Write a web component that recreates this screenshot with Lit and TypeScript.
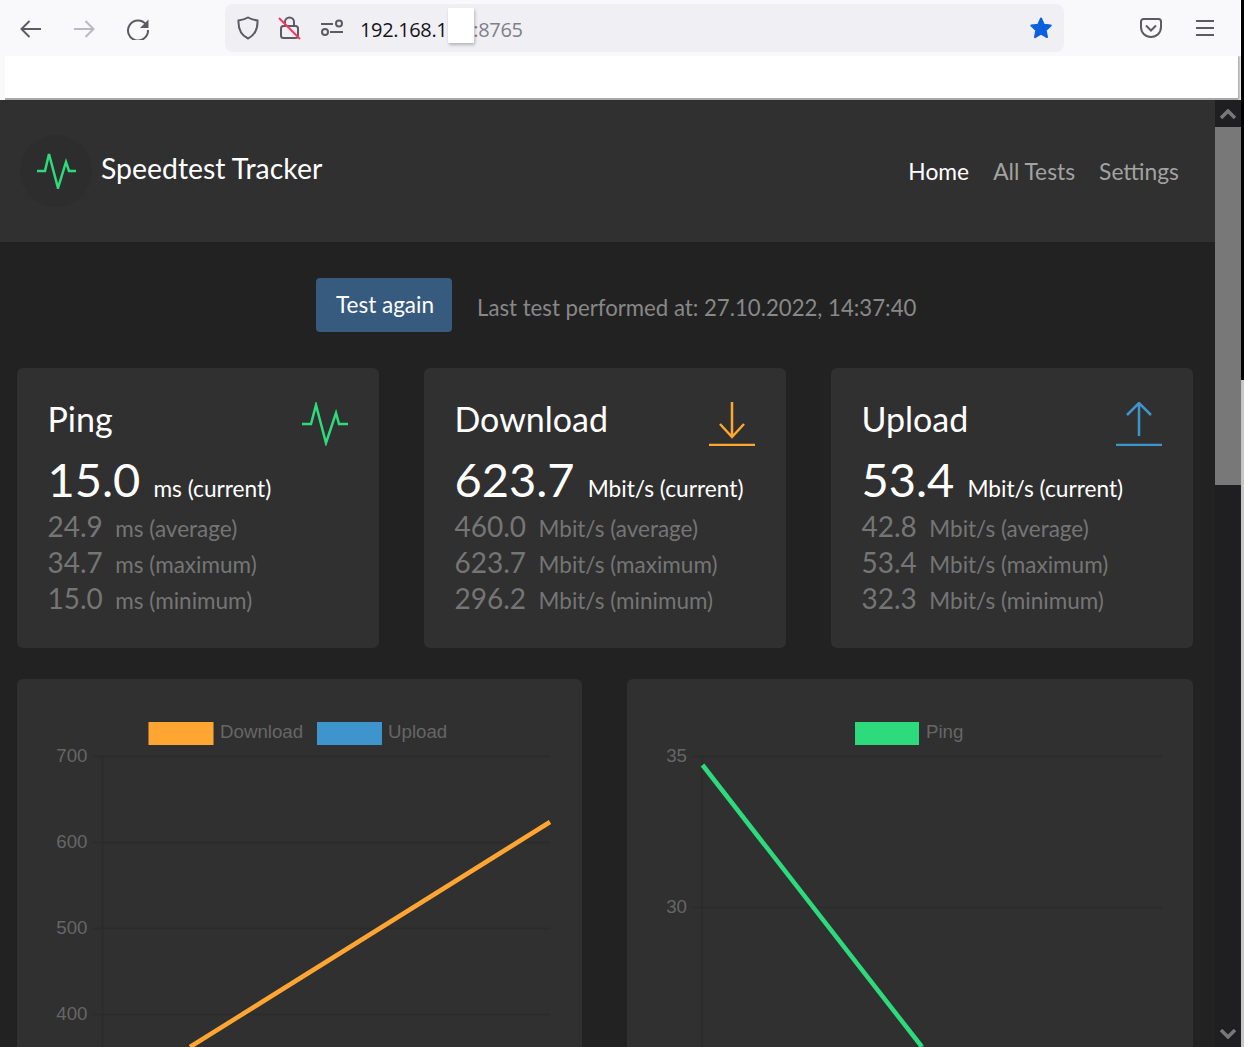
import { LitElement, html, svg, css } from 'lit';
import { customElement, property } from 'lit/decorators.js';

const GREEN = '#2edb7c';
const ORANGE = '#ffa632';
const BLUE = '#3e95cd';

interface Reading {
  value: string;
  label: string;
}

interface ChartSpec {
  legend: { x: number; width: number; textX: number; label: string; color: string }[];
  ticks: { y: number; label: string }[];
  axisX: number;
  rightX: number;
  line: { x1: number; y1: number; x2: number; y2: number; color: string };
}

@customElement('browser-bar')
export class BrowserBar extends LitElement {
  static styles = css`
    :host {
      display: flex;
      align-items: center;
      height: 56px;
      background: #f9f9fb;
      position: relative;
    }
    svg {
      display: block;
      flex: none;
      fill: none;
      stroke: #5b5b66;
      stroke-width: 2;
    }
    .nav {
      display: flex;
      gap: 30px;
      margin-left: 18px;
    }
    .faded {
      stroke: #b9b9c0;
    }
    .urlbar {
      display: flex;
      align-items: center;
      width: 839px;
      height: 48px;
      margin-left: 75px;
      padding-left: 11px;
      box-sizing: border-box;
      background: #f0f0f4;
      border-radius: 8px;
      position: relative;
    }
    .site {
      display: flex;
      gap: 18px;
    }
    .url {
      margin: 2px 0 0 16px;
      font: 20px 'Open Sans', sans-serif;
      letter-spacing: -0.35px;
      color: #15141a;
      white-space: nowrap;
    }
    .url span {
      color: #7f7f86;
      margin-left: 21px;
    }
    .star {
      margin-left: auto;
      margin-right: 11px;
      fill: #0a60df;
      stroke: #0a60df;
      stroke-linejoin: round;
    }
    .redact {
      position: absolute;
      left: 223px;
      top: 4px;
      width: 26px;
      height: 35px;
      background: #fff;
      box-shadow: 1px 2px 3px rgba(0, 0, 0, 0.25);
    }
    .tools {
      display: flex;
      align-items: center;
      gap: 31px;
      margin-left: 75px;
    }
  `;

  render() {
    return html`
      <div class="nav">
        <svg width="24" height="24" viewBox="0 0 24 24"><path d="M23 13H3.500M11.500 5L3.500 13l8 8" /></svg>
        <svg class="faded" width="24" height="24" viewBox="0 0 24 24"><path d="M2 13h19.500M13.500 5l8 8-8 8" /></svg>
        <svg width="24" height="24" viewBox="0 0 24 24">
          <path d="M20 8.500A10 10 0 1 0 22 14" />
          <path d="M22.500 3.500v8.500H14z" fill="#5b5b66" stroke="none" />
        </svg>
      </div>
      <div class="urlbar">
        <div class="site">
          <svg width="24" height="26" viewBox="0 0 24 26">
            <path d="M12 2.500c3 1.800 6 2.600 9.500 3 .4 8.500-2.500 14.500-9.500 18C5 20 2.100 14 2.500 5.500c3.500-.4 6.500-1.200 9.500-3z" />
          </svg>
          <svg width="24" height="26" viewBox="0 0 24 26">
            <rect x="3" y="11" width="17" height="12" rx="2.500" />
            <path d="M7 11V7a4.500 4.500 0 0 1 9 0v4" />
            <path d="M1 3l21 21" stroke="#f6375f" />
          </svg>
          <svg width="24" height="26" viewBox="0 0 24 26">
            <path d="M1 9h12M10 17h13" />
            <circle cx="19" cy="8.500" r="3" />
            <circle cx="5" cy="17" r="3" />
          </svg>
        </div>
        <div class="url">192.168.1.<span>:8765</span></div>
        <div class="redact"></div>
        <svg class="star" width="24" height="24" viewBox="0 0 24 24">
          <path d="M12 2.500l2.900 6.300 6.800.8-5 4.700 1.300 6.800-6-3.400-6 3.400 1.300-6.800-5-4.700 6.800-.8z" />
        </svg>
      </div>
      <div class="tools">
        <svg width="24" height="24" viewBox="0 0 24 24">
          <path d="M4.500 3h15A2.500 2.500 0 0 1 22 5.500V11c0 6-4.500 10-10 10S2 17 2 11V5.500A2.500 2.500 0 0 1 4.500 3z" />
          <path d="M7 9.500l5 5 5-5" />
        </svg>
        <svg width="22" height="24" viewBox="0 0 22 24"><path d="M2 5h18M2 12h18M2 19h18" /></svg>
      </div>
    `;
  }
}

@customElement('stat-card')
export class StatCard extends LitElement {
  static styles = css`
    :host {
      display: block;
      height: 280px;
      padding: 34px 31px 0 30.5px;
      box-sizing: border-box;
      background: #303030;
      border-radius: 6px;
      color: #fff;
    }
    .head {
      display: flex;
      justify-content: space-between;
      height: 44px;
    }
    h3 {
      margin: 0;
      font-size: 34px;
      font-weight: 400;
      line-height: 34px;
    }
    .current {
      margin-top: 8px;
      height: 54px;
      line-height: 50px;
      font-size: 22.7px;
      white-space: nowrap;
    }
    .current b {
      font-size: 47px;
      font-weight: 400;
      margin-right: 13px;
    }
    .row {
      height: 36px;
      line-height: 36px;
      font-size: 22.5px;
      color: #757575;
      white-space: nowrap;
    }
    .row b {
      font-size: 28px;
      font-weight: 400;
      margin-right: 12.5px;
    }
  `;

  @property() heading = '';
  @property() unit = '';
  @property() current = '';
  @property({ type: Array }) readings: Reading[] = [];

  render() {
    return html`
      <div class="head">
        <h3>${this.heading}</h3>
        <slot></slot>
      </div>
      <div class="current"><b>${this.current}</b>${this.unit} (current)</div>
      ${this.readings.map(
        (r) => html`<div class="row"><b>${r.value}</b>${this.unit} (${r.label})</div>`
      )}
    `;
  }
}

@customElement('chart-card')
export class ChartCard extends LitElement {
  static styles = css`
    :host {
      display: block;
      height: 500px;
      background: #303030;
      border-radius: 6px;
    }
    svg {
      display: block;
      width: 100%;
      height: 100%;
    }
    text {
      font: 18.7px 'Liberation Sans', Arial, sans-serif;
      fill: #666;
    }
    .grid {
      stroke: #2b2b2b;
      stroke-width: 1.500;
    }
  `;

  @property({ type: Object }) spec!: ChartSpec;

  render() {
    const s = this.spec;
    return html`
      <svg>
        ${s.legend.map(
          (l) => svg`
            <rect x=${l.x} y="43" width=${l.width} height="23" fill=${l.color} />
            <text x=${l.textX} y="59">${l.label}</text>
          `
        )}
        <line class="grid" x1=${s.axisX} y1="77" x2=${s.axisX} y2="500" />
        ${s.ticks.map(
          (t) => svg`
            <line class="grid" x1=${s.axisX - 10} y1=${t.y} x2=${s.rightX} y2=${t.y} />
            <text x=${s.axisX - 15} y=${t.y + 5} text-anchor="end">${t.label}</text>
          `
        )}
        <line
          x1=${s.line.x1}
          y1=${s.line.y1}
          x2=${s.line.x2}
          y2=${s.line.y2}
          stroke=${s.line.color}
          stroke-width="4.500"
        />
      </svg>
    `;
  }
}

const downloadChart: ChartSpec = {
  legend: [
    { x: 131.5, width: 65, textX: 203, label: 'Download', color: ORANGE },
    { x: 300, width: 65, textX: 371, label: 'Upload', color: BLUE },
  ],
  ticks: [
    { y: 77.5, label: '700' },
    { y: 163.5, label: '600' },
    { y: 249.5, label: '500' },
    { y: 335.5, label: '400' },
    { y: 421.5, label: '300' },
  ],
  axisX: 85.5,
  rightX: 533,
  line: { x1: 533, y1: 143, x2: 173, y2: 368, color: ORANGE },
};

const pingChart: ChartSpec = {
  legend: [{ x: 228, width: 64, textX: 299, label: 'Ping', color: GREEN }],
  ticks: [
    { y: 77.5, label: '35' },
    { y: 228.5, label: '30' },
    { y: 379.5, label: '25' },
  ],
  axisX: 75,
  rightX: 535,
  line: { x1: 75.5, y1: 86, x2: 295, y2: 368, color: GREEN },
};

@customElement('app-root')
export class AppRoot extends LitElement {
  static styles = css`
    :host {
      display: flex;
      width: 1244px;
      height: 1047px;
      overflow: hidden;
      font-family: Lato, sans-serif;
      background: #222;
    }
    .window {
      width: 1241px;
      display: flex;
      flex-direction: column;
    }
    .edge {
      width: 3px;
      background: linear-gradient(#000 380px, #c6c6c6 380px);
    }
    .blank {
      height: 44px;
      background: #f9f9fb;
    }
    .blank div {
      height: 42px;
      margin: 0 3px 0 5px;
      background: #fff;
      border-bottom: 2px solid #a8a8a8;
      box-shadow: 2px 0 2px rgba(0, 0, 0, 0.3);
    }
    .page {
      flex: 1;
      display: flex;
      min-height: 0;
    }
    .content {
      width: 1215px;
    }
    .navbar {
      display: flex;
      align-items: center;
      height: 142px;
      padding: 0 36px 0 20px;
      box-sizing: border-box;
      background: #303030;
    }
    .logo {
      width: 72px;
      height: 72px;
      border-radius: 50%;
      background: #2d2d2d;
      display: flex;
      align-items: center;
      justify-content: center;
    }
    .brand {
      margin: -6px 0 0 9px;
      font-size: 28.4px;
      color: #fff;
    }
    nav {
      margin-left: auto;
      display: flex;
      gap: 24px;
      font-size: 22.8px;
      color: #a2a2a2;
    }
    nav .active {
      color: #fff;
    }
    .actions {
      display: flex;
      align-items: center;
      gap: 25px;
      margin: 36px 0;
      padding-left: 316px;
    }
    button {
      width: 136px;
      height: 54px;
      padding: 0 0 2px 2px;
      margin: 0;
      border: none;
      border-radius: 4px;
      background: #375a7f;
      color: #fff;
      font: 22.5px Lato, sans-serif;
    }
    .last {
      font-size: 22.2px;
      color: #888;
      padding-top: 4px;
    }
    .stats,
    .charts {
      display: grid;
      column-gap: 45px;
      padding: 0 22px 0 17px;
    }
    .stats {
      grid-template-columns: repeat(3, minmax(0, 1fr));
    }
    .charts {
      grid-template-columns: 565px 566px;
      margin-top: 31px;
    }
    .icon {
      display: block;
      fill: none;
      stroke-width: 2.500;
    }
    .scrollbar {
      width: 26px;
      display: flex;
      flex-direction: column;
      background: #1f1f21;
    }
    .arrow {
      height: 27px;
      flex: none;
      display: flex;
      align-items: center;
      justify-content: center;
      box-sizing: border-box;
    }
    .arrow svg {
      fill: none;
      stroke: #787878;
      stroke-width: 3.500;
    }
    .thumb {
      height: 358px;
      background: #787878;
    }
    .grow {
      flex: 1;
    }
  `;

  render() {
    return html`
      <div class="window">
        <browser-bar></browser-bar>
        <div class="blank"><div></div></div>
        <div class="page">
          <div class="content">
            <div class="navbar">
              <div class="logo">
                <svg class="icon" width="40" height="36" viewBox="36 153 40 36" stroke=${GREEN}>
                  <path d="M37 171h8l4-17 9 34 8-26 3 9h7" />
                </svg>
              </div>
              <div class="brand">Speedtest Tracker</div>
              <nav>
                <span class="active">Home</span>
                <span>All Tests</span>
                <span>Settings</span>
              </nav>
            </div>
            <div class="actions">
              <button>Test again</button>
              <span class="last">Last test performed at: 27.10.2022, 14:37:40</span>
            </div>
            <div class="stats">
              <stat-card
                heading="Ping"
                unit="ms"
                current="15.0"
                .readings=${[
                  { value: '24.9', label: 'average' },
                  { value: '34.7', label: 'maximum' },
                  { value: '15.0', label: 'minimum' },
                ]}
              >
                <svg class="icon" width="46" height="44" viewBox="302 402 46 44" stroke=${GREEN}>
                  <path d="M302 424h9l5-19 10 38 10-30 3 11h9" />
                </svg>
              </stat-card>
              <stat-card
                heading="Download"
                unit="Mbit/s"
                current="623.7"
                .readings=${[
                  { value: '460.0', label: 'average' },
                  { value: '623.7', label: 'maximum' },
                  { value: '296.2', label: 'minimum' },
                ]}
              >
                <svg class="icon" width="46" height="44" viewBox="0 0 46 44" stroke=${ORANGE}>
                  <path d="M23 0v35M11 22l12 13 12-13M0 43h46" />
                </svg>
              </stat-card>
              <stat-card
                heading="Upload"
                unit="Mbit/s"
                current="53.4"
                .readings=${[
                  { value: '42.8', label: 'average' },
                  { value: '53.4', label: 'maximum' },
                  { value: '32.3', label: 'minimum' },
                ]}
              >
                <svg class="icon" width="46" height="44" viewBox="0 0 46 44" stroke=${BLUE}>
                  <path d="M23 34V1M11 13L23 1l12 12M0 43h46" />
                </svg>
              </stat-card>
            </div>
            <div class="charts">
              <chart-card .spec=${downloadChart}></chart-card>
              <chart-card .spec=${pingChart}></chart-card>
            </div>
          </div>
          <div class="scrollbar">
            <div class="arrow"><svg width="16" height="10" viewBox="0 0 16 10"><path d="M1 9l7-7 7 7" /></svg></div>
            <div class="thumb"></div>
            <div class="grow"></div>
            <div class="arrow"><svg width="16" height="10" viewBox="0 0 16 10"><path d="M1 1l7 7 7-7" /></svg></div>
          </div>
        </div>
      </div>
      <div class="edge"></div>
    `;
  }
}

declare global {
  interface HTMLElementTagNameMap {
    'app-root': AppRoot;
    'browser-bar': BrowserBar;
    'stat-card': StatCard;
    'chart-card': ChartCard;
  }
}
